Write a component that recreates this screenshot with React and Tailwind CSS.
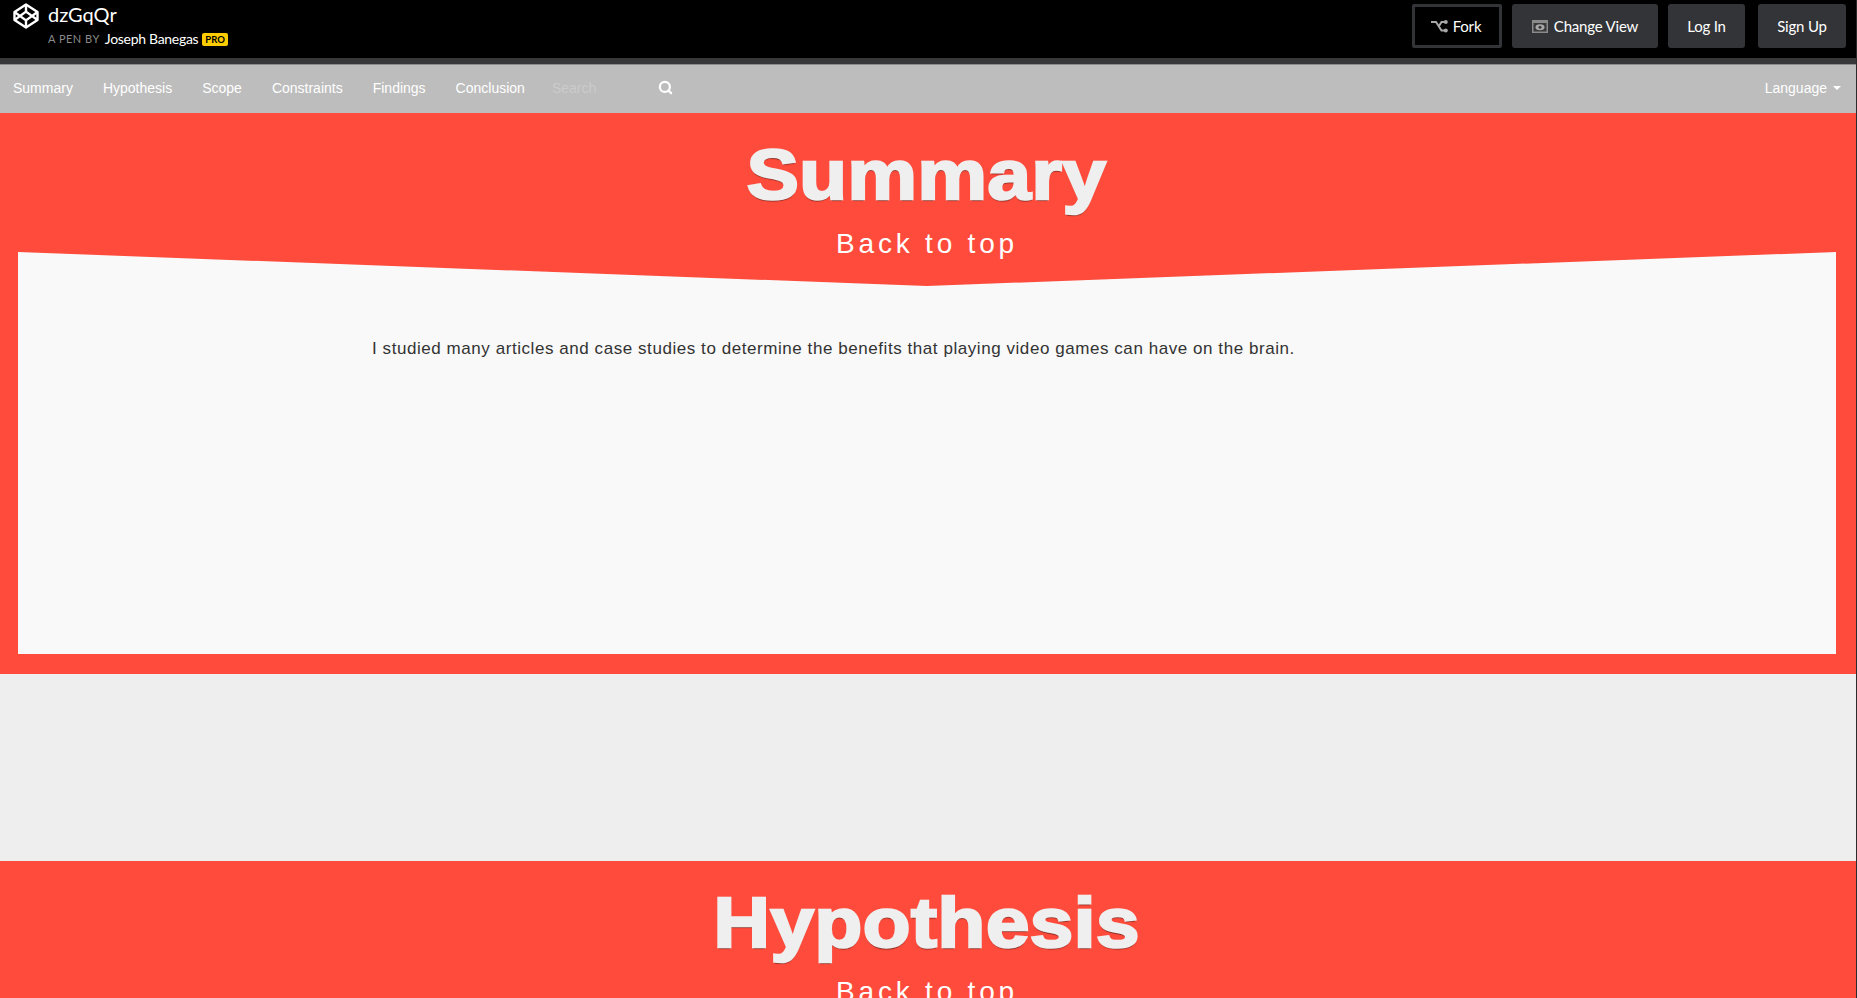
import {Search} from "lucide-react";

const navLinks = ["Summary", "Hypothesis", "Scope", "Constraints", "Findings", "Conclusion"];

function PenLogo() {
    return (
        <svg viewBox="0 0 26 26" className="w-[26px] h-[26px] mt-[-1px]" fill="none" stroke="#fff" strokeWidth="2.4" strokeLinejoin="round">
            <path d="M13 1.5 24.5 9v8L13 24.5 1.5 17V9z"/>
            <path d="M13 1.5V8.6M13 17.4v7.1M1.5 9 13 17.4 24.5 9M1.5 17 13 8.6 24.5 17"/>
        </svg>
    );
}

function ForkIcon() {
    return (
        <svg viewBox="0 0 17 13" className="w-[17px] h-[13px] ml-[-2px]" fill="none" stroke="#a8a8a8" strokeWidth="2">
            <path d="M0 2h5l5.5 8.5H15M8 6l2.5-4H15"/>
            <circle cx="14.8" cy="2" r="2" fill="#a8a8a8" stroke="none"/>
            <circle cx="14.8" cy="10.5" r="2" fill="#a8a8a8" stroke="none"/>
        </svg>
    );
}

function ViewIcon() {
    return (
        <svg viewBox="0 0 16 13" className="w-4 h-[13px]">
            <rect x="0" y="0" width="16" height="13" fill="#8a8a8a"/>
            <rect x="1.5" y="3" width="13" height="8.5" fill="#383838"/>
            <ellipse cx="8" cy="7.2" rx="4.5" ry="3" fill="#a8a8a8"/>
            <circle cx="8" cy="7.2" r="1.5" fill="#383838"/>
        </svg>
    );
}

function TopBar() {
    return (
        <header className="flex h-[58px] items-start justify-between bg-black font-['Lato',sans-serif] text-white">
            <div className="flex pl-[13px] pt-[4px]">
                <PenLogo/>
                <div className="ml-[9px] mt-[-2px]">
                    <div className="text-[20px] leading-[24px]">dzGqQr</div>
                    <div className="mt-[5px] flex items-center text-[14px] leading-[16px] tracking-[-0.3px]">
                        <span className="text-[11px] tracking-[0.5px] text-[#8a8a8a]">A PEN BY</span>
                        <span className="ml-[5px]">Joseph Banegas</span>
                        <span className="ml-[4px] rounded-[2px] bg-[#ffcc00] px-[3px] text-[9.5px] font-bold leading-[13px] text-black tracking-normal">PRO</span>
                    </div>
                </div>
            </div>
            <div className="flex items-center pt-[4px] pr-[10px] text-[15px] tracking-[-0.2px]">
                <button className="flex h-[44px] w-[90px] items-center justify-center gap-[5px] rounded-[2px] border-[3px] border-[#333438]">
                    <ForkIcon/>Fork
                </button>
                <button className="ml-[10px] flex h-[44px] w-[146px] items-center justify-center gap-[6px] rounded-[3px] bg-[#333438]">
                    <ViewIcon/>Change View
                </button>
                <button className="ml-[10px] h-[44px] w-[77px] rounded-[3px] bg-[#333438]">Log In</button>
                <button className="ml-[13px] h-[44px] w-[88px] rounded-[3px] bg-[#333438]">Sign Up</button>
            </div>
        </header>
    );
}

function NavBar() {
    return (
        <nav className="flex h-[49px] items-center justify-between border-t border-[#8c8c8c] bg-[#bdbdbd] pb-[2px] pl-[13px] pr-[15px] font-['Liberation_Sans',sans-serif] text-[14px] text-white">
            <div className="flex items-center">
                <div className="flex gap-[30px]">
                    {navLinks.map((link) => (
                        <a key={link}>{link}</a>
                    ))}
                </div>
                <span className="ml-[27px] w-[106px] text-[#cbcbcb]">Search</span>
                <Search size={15} strokeWidth={3.6} color="#fff" className="mt-[-1px]"/>
            </div>
            <div className="flex items-center gap-[6px]">
                Language
                <span className="h-0 w-0 border-x-[4px] border-t-[4px] border-x-transparent border-t-white"/>
            </div>
        </nav>
    );
}

function SectionHeading({title}) {
    return (
        <>
            <div className="text-center">
                <h1 className="inline-block scale-x-[1.1] font-['Liberation_Sans',sans-serif] text-[71px] leading-[76px] font-bold tracking-[0.5px] text-[#efefef] [-webkit-text-stroke:2.5px_#efefef] [text-shadow:0_2px_1px_#7a2c22]">
                    {title}
                </h1>
            </div>
            <a className="mt-[14px] block text-center font-['Liberation_Sans',sans-serif] text-[28px] leading-[34px] tracking-[3.8px] text-white">
                Back to top
            </a>
        </>
    );
}

export default function App() {
    return (
        <div className="h-[998px] overflow-hidden border-r border-[#2b2b2b] bg-[#eeeeee]">
            <TopBar/>
            <div className="h-[6px] bg-[#38383b]"/>
            <NavBar/>
            <section className="h-[561px] bg-[#ff4b3c] pl-[18px] pr-[20px] pt-[24px]">
                <SectionHeading title="Summary"/>
                <div className="mt-[-9px] h-[402px] bg-[#f9f9f9] pl-[354px] pt-[85px] [clip-path:polygon(0_0,50%_34px,100%_0,100%_100%,0_100%)]">
                    <p className="font-['Liberation_Sans',sans-serif] text-[17px] leading-[24px] tracking-[0.56px] text-[#333]">
                        I studied many articles and case studies to determine the benefits that playing video games can have on the brain.
                    </p>
                </div>
            </section>
            <div className="h-[187px]"/>
            <section className="h-[137px] bg-[#ff4b3c] pl-[18px] pr-[20px] pt-[24px]">
                <SectionHeading title="Hypothesis"/>
            </section>
        </div>
    );
}
